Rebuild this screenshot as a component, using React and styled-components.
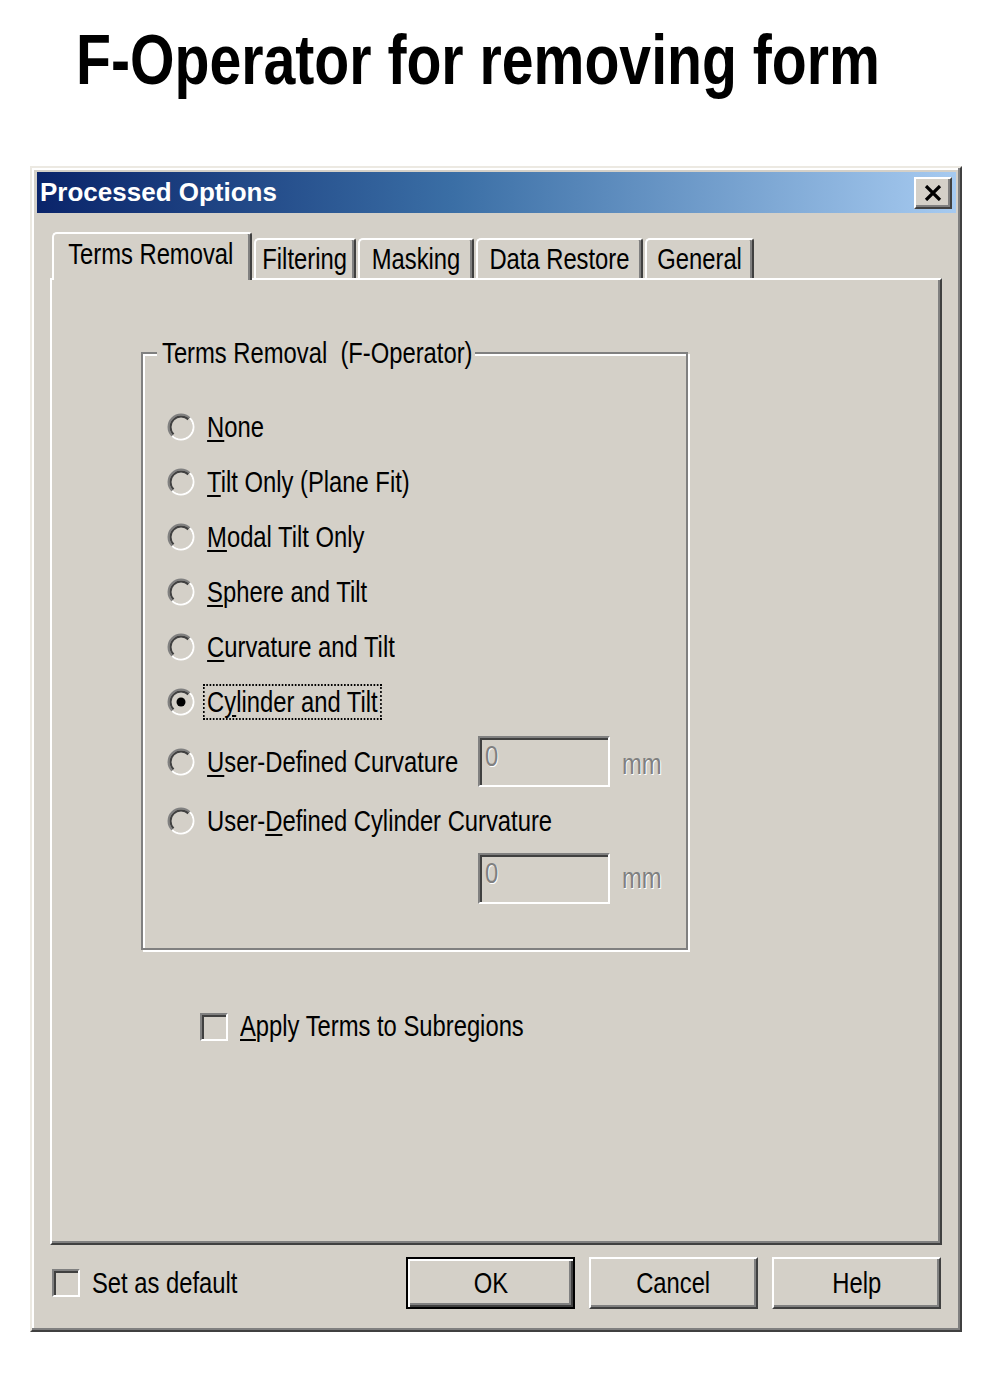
import React from "react";
import styled, { createGlobalStyle, css } from "styled-components";

const GlobalStyle = createGlobalStyle`
  html, body { margin: 0; padding: 0; background: #ffffff; }
  body { font-family: "Liberation Sans", Arial, sans-serif; }
`;

const FACE = "#d4d0c8";
const SHADOW = "#808080";
const DARK = "#404040";
const UI_FONT = `"Liberation Sans", Arial, sans-serif`;

/* Condensed text: the reference uses a narrow face, emulated by a horizontal squeeze */
const Narrow = styled.span`
  display: inline-block;
  white-space: ${(p) => (p.$pre ? "pre" : "nowrap")};
  transform: scaleX(${(p) => p.$k || 0.82});
  transform-origin: ${(p) => p.$origin || "left"} center;
`;

const Page = styled.div`
  width: 1000px;
  height: 1385px;
  padding-top: 20px;
  box-sizing: border-box;
  overflow: hidden;
`;

const Heading = styled.h1`
  margin: 0 0 0 76px;
  height: 146px;
  font-family: "Liberation Sans", Arial, sans-serif;
  font-weight: 700;
  font-size: 70px;
  line-height: 80px;
  color: #000;
  white-space: nowrap;
`;

const Dialog = styled.div`
  margin-left: 30px;
  width: 932px;
  height: 1166px;
  box-sizing: border-box;
  background: ${FACE};
  border: 2px solid;
  border-color: #ece9e2 ${DARK} ${DARK} #ece9e2;
  box-shadow: inset -2px -2px 0 ${SHADOW}, inset 2px 2px 0 #ffffff;
  padding: 4px 4px 4px 5px;
  display: flex;
  flex-direction: column;
  font-family: ${UI_FONT};
  font-size: 29px;
  color: #000;
`;

const TitleBar = styled.div`
  height: 41px;
  flex: none;
  display: flex;
  align-items: center;
  justify-content: space-between;
  padding: 0 4px 0 3px;
  background: linear-gradient(90deg, #0a246a 0%, #3a6ea5 45%, #a6caf0 100%);
`;

const Title = styled.span`
  font-family: "Liberation Sans", Arial, sans-serif;
  font-weight: 700;
  font-size: 26px;
  color: #ffffff;
`;

const CloseButton = styled.div`
  width: 38px;
  height: 32px;
  box-sizing: border-box;
  background: ${FACE};
  border: 2px solid;
  border-color: #ffffff ${DARK} ${DARK} #ffffff;
  box-shadow: inset -2px -2px 0 ${SHADOW};
  display: flex;
  align-items: center;
  justify-content: center;
`;

const Body = styled.div`
  flex: 1;
  display: flex;
  flex-direction: column;
  padding: 19px 14px 0 13px;
`;

const TabStrip = styled.div`
  display: flex;
  align-items: flex-end;
  gap: 2px;
  height: 46px;
  padding-left: 2px;
  position: relative;
  z-index: 2;
`;

const Tab = styled.div`
  width: ${(p) => p.$w}px;
  height: 40px;
  box-sizing: border-box;
  background: ${FACE};
  border-left: 2px solid #ffffff;
  border-top: 2px solid #ffffff;
  border-right: 2px solid ${DARK};
  border-radius: 5px 3px 0 0;
  box-shadow: inset -2px 0 0 ${SHADOW};
  display: flex;
  align-items: center;
  justify-content: center;
  ${(p) =>
    p.$active &&
    css`
      height: 48px;
      margin-bottom: -2px;
      padding-bottom: 6px;
      padding-right: 2px;
    `}
`;

const Panel = styled.div`
  flex: none;
  height: 967px;
  box-sizing: border-box;
  border: 2px solid;
  border-color: #ffffff ${DARK} ${DARK} #ffffff;
  box-shadow: inset -2px -2px 0 ${SHADOW};
  padding: 56px 0 0 89px;
  display: flex;
  flex-direction: column;
  align-items: flex-start;
`;

const GroupBox = styled.fieldset`
  margin: 0;
  width: 547px;
  height: 614px;
  box-sizing: border-box;
  border: 2px solid ${SHADOW};
  box-shadow: inset 2px 2px 0 #ffffff, 2px 2px 0 #ffffff;
  padding: 29px 0 0 0;
  min-width: 0;
`;

const Legend = styled.legend`
  margin-left: 14px;
  width: 318px;
  box-sizing: border-box;
  padding: 0 0 0 5px;
  line-height: 34px;
  background: ${FACE};
`;

const OptionList = styled.div`
  padding-left: 24px;
`;

const OptionRow = styled.div`
  height: ${(p) => p.$h}px;
  display: grid;
  grid-template-columns: 311px 132px auto;
  align-items: ${(p) => (p.$top ? "start" : "center")};
`;

const RadioLabel = styled.label`
  display: flex;
  align-items: center;
  gap: 8px;
  white-space: nowrap;
`;

const LabelText = styled(Narrow)`
  padding: 0 3px;
  line-height: 32px;
  border: 2px dotted ${(p) => (p.$focus ? "#000" : "transparent")};
`;

const Key = styled.span`
  text-decoration: underline;
  text-underline-offset: 3px;
  text-decoration-thickness: 2px;
`;

const TextInput = styled.div`
  grid-column: 2;
  height: 51px;
  box-sizing: border-box;
  background: ${FACE};
  border: 2px solid;
  border-color: ${SHADOW} #ffffff #ffffff ${SHADOW};
  box-shadow: inset 2px 2px 0 ${DARK}, inset -2px -2px 0 ${FACE};
  padding: 0 0 10px 5px;
  display: flex;
  align-items: center;
  color: ${SHADOW};
  text-shadow: 1px 1px 0 #ffffff;
  margin-top: ${(p) => p.$mt || 0}px;
`;

const Unit = styled(Narrow)`
  grid-column: 3;
  margin-left: 12px;
  color: ${SHADOW};
  text-shadow: 1px 1px 0 #ffffff;
  align-self: center;
  padding-top: 6px;
`;

const CheckRow = styled.label`
  display: flex;
  align-items: center;
  gap: 12px;
  margin: ${(p) => p.$m || "0"};
  white-space: nowrap;
`;

const CheckBox = styled.span`
  width: 28px;
  height: 28px;
  flex: none;
  box-sizing: border-box;
  background: ${FACE};
  border: 2px solid;
  border-color: ${SHADOW} #ffffff #ffffff ${SHADOW};
  box-shadow: inset 2px 2px 0 ${DARK}, inset -2px -2px 0 ${FACE};
`;

const Footer = styled.div`
  display: flex;
  align-items: center;
  padding: 12px 1px 0 2px;
`;

const ButtonGroup = styled.div`
  margin-left: auto;
  display: flex;
  gap: 14px;
`;

const Button = styled.div`
  width: 169px;
  height: 52px;
  box-sizing: border-box;
  background: ${FACE};
  display: flex;
  align-items: center;
  justify-content: center;
  border: 2px solid;
  border-color: #ffffff ${DARK} ${DARK} #ffffff;
  box-shadow: inset -2px -2px 0 ${SHADOW};
  ${(p) =>
    p.$default &&
    css`
      border: 2px solid #000;
      box-shadow: inset 2px 2px 0 #ffffff, inset -2px -2px 0 ${DARK},
        inset -4px -4px 0 ${SHADOW};
    `}
`;

function Radio({ checked }) {
  const r1 = 12.5;
  const r2 = 10.5;
  const c = 14;
  const k = 0.7071;
  const arc = (r) =>
    `M ${c - r * k} ${c + r * k} A ${r} ${r} 0 0 1 ${c + r * k} ${c - r * k}`;
  const arcB = (r) =>
    `M ${c + r * k} ${c - r * k} A ${r} ${r} 0 0 1 ${c - r * k} ${c + r * k}`;
  return (
    <svg width="28" height="28" viewBox="0 0 28 28" style={{ flex: "none" }}>
      <circle cx={c} cy={c} r={11} fill={FACE} />
      <path d={arc(r1)} stroke={SHADOW} strokeWidth="2" fill="none" />
      <path d={arcB(r1)} stroke="#ffffff" strokeWidth="2" fill="none" />
      <path d={arc(r2)} stroke={DARK} strokeWidth="2" fill="none" />
      <path d={arcB(r2)} stroke={FACE} strokeWidth="2" fill="none" />
      {checked && <circle cx={c} cy={c} r={4.5} fill="#000" />}
    </svg>
  );
}

function Option({ k, rest, pre, checked, focus }) {
  return (
    <RadioLabel>
      <Radio checked={checked} />
      <LabelText $focus={focus}>
        {pre}
        <Key>{k}</Key>
        {rest}
      </LabelText>
    </RadioLabel>
  );
}

const tabs = [
  { label: "Terms Removal", w: 200, active: true },
  { label: "Filtering", w: 102 },
  { label: "Masking", w: 116 },
  { label: "Data Restore", w: 167 },
  { label: "General", w: 109 },
];

export default function App() {
  return (
    <>
      <GlobalStyle />
      <Page>
        <Heading>
          <Narrow $k={0.817}>F-Operator for removing form</Narrow>
        </Heading>
        <Dialog>
          <TitleBar>
            <Title>Processed Options</Title>
            <CloseButton>
              <svg width="18" height="16" viewBox="0 0 18 16">
                <path d="M2 1 L16 15 M16 1 L2 15" stroke="#000" strokeWidth="3.2" />
              </svg>
            </CloseButton>
          </TitleBar>
          <Body>
            <TabStrip>
              {tabs.map((t) => (
                <Tab key={t.label} $w={t.w} $active={t.active}>
                  <Narrow $origin="center">{t.label}</Narrow>
                </Tab>
              ))}
            </TabStrip>
            <Panel>
              <GroupBox>
                <Legend>
                  <Narrow $pre>{"Terms Removal  (F-Operator)"}</Narrow>
                </Legend>
                <OptionList>
                  <OptionRow $h={55}>
                    <Option k="N" rest="one" />
                  </OptionRow>
                  <OptionRow $h={55}>
                    <Option k="T" rest="ilt Only (Plane Fit)" />
                  </OptionRow>
                  <OptionRow $h={55}>
                    <Option k="M" rest="odal Tilt Only" />
                  </OptionRow>
                  <OptionRow $h={55}>
                    <Option k="S" rest="phere and Tilt" />
                  </OptionRow>
                  <OptionRow $h={55}>
                    <Option k="C" rest="urvature and Tilt" />
                  </OptionRow>
                  <OptionRow $h={55}>
                    <Option pre="C" k="y" rest="linder and Tilt" checked focus />
                  </OptionRow>
                  <OptionRow $h={65}>
                    <Option k="U" rest="ser-Defined Curvature" />
                    <TextInput>
                      <Narrow>0</Narrow>
                    </TextInput>
                    <Unit>mm</Unit>
                  </OptionRow>
                  <OptionRow $h={53}>
                    <Option pre="User-" k="D" rest="efined Cylinder Curvature" />
                  </OptionRow>
                  <OptionRow $h={57} $top>
                    <TextInput $mt={6}>
                      <Narrow>0</Narrow>
                    </TextInput>
                    <Unit>mm</Unit>
                  </OptionRow>
                </OptionList>
              </GroupBox>
              <CheckRow $m="60px 0 0 59px">
                <CheckBox />
                <Narrow>
                  <Key>A</Key>pply Terms to Subregions
                </Narrow>
              </CheckRow>
            </Panel>
            <Footer>
              <CheckRow>
                <CheckBox />
                <Narrow>Set as default</Narrow>
              </CheckRow>
              <ButtonGroup>
                <Button $default>
                  <Narrow $origin="center">OK</Narrow>
                </Button>
                <Button>
                  <Narrow $origin="center">Cancel</Narrow>
                </Button>
                <Button>
                  <Narrow $origin="center">Help</Narrow>
                </Button>
              </ButtonGroup>
            </Footer>
          </Body>
        </Dialog>
      </Page>
    </>
  );
}
